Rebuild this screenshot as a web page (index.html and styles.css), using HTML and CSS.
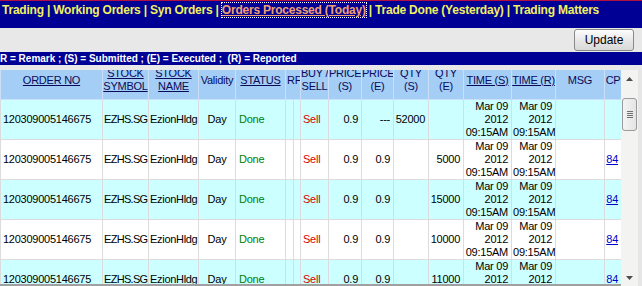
FILE: index.html
```html
<!DOCTYPE html>
<html>
<head>
<meta charset="utf-8">
<link rel="stylesheet" href="styles.css">
</head>
<body>
<div class="topline"></div>
<nav class="nav">
  <a class="nav-link" href="#">Trading</a> | <a class="nav-link" href="#">Working Orders</a> | <a class="nav-link" href="#">Syn Orders</a> | <a class="nav-link active" href="#">Orders Processed (Today)</a> | <a class="nav-link" href="#">Trade Done (Yesterday)</a> | <a class="nav-link" href="#">Trading Matters</a>
</nav>
<div class="toolbar"><button class="btn">Update</button></div>
<div class="legend">R = Remark ; (S) = Submitted ; (E) = Executed ;&nbsp; (R) = Reported</div>
<div class="gap"></div>
<div class="grid-wrap">
  <div class="viewport">
    <table class="orders">
      <colgroup>
        <col style="width:102px"><col style="width:46px"><col style="width:50px"><col style="width:37px"><col style="width:50px"><col style="width:8px"><col style="width:7px"><col style="width:28px"><col style="width:33px"><col style="width:32px"><col style="width:35px"><col style="width:35px"><col style="width:48px"><col style="width:44px"><col style="width:49px"><col style="width:17px">
      </colgroup>
      <thead>
        <tr>
          <th><a href="#">ORDER NO</a></th>
          <th><a href="#">STOCK<br>SYMBOL</a></th>
          <th><a href="#">STOCK<br>NAME</a></th>
          <th>Validity</th>
          <th><a href="#">STATUS</a></th>
          <th colspan="2" class="rf">RF</th>
          <th>BUY /<br>SELL</th>
          <th>PRICE<br>(S)</th>
          <th>PRICE<br>(E)</th>
          <th>QTY<br>(S)</th>
          <th>QTY<br>(E)</th>
          <th><a href="#">TIME (S)</a></th>
          <th><a href="#">TIME (R)</a></th>
          <th>MSG</th>
          <th>CP</th>
        </tr>
      </thead>
      <tbody>
        <tr class="alt">
          <td class="l">120309005146675</td><td class="l sym">EZHS.SG</td><td class="l nm">EzionHldg</td><td class="c">Day</td><td class="l done">Done</td><td></td><td></td><td class="l sell">Sell</td><td class="r">0.9</td><td class="r">---</td><td class="r">52000</td><td class="r"></td><td class="r">Mar 09<br>2012<br>09:15AM</td><td class="r">Mar 09<br>2012<br>09:15AM</td><td></td><td></td>
        </tr>
        <tr>
          <td class="l">120309005146675</td><td class="l sym">EZHS.SG</td><td class="l nm">EzionHldg</td><td class="c">Day</td><td class="l done">Done</td><td></td><td></td><td class="l sell">Sell</td><td class="r">0.9</td><td class="r">0.9</td><td class="r"></td><td class="r">5000</td><td class="r">Mar 09<br>2012<br>09:15AM</td><td class="r">Mar 09<br>2012<br>09:15AM</td><td></td><td class="r"><a class="cp" href="#">84</a></td>
        </tr>
        <tr class="alt">
          <td class="l">120309005146675</td><td class="l sym">EZHS.SG</td><td class="l nm">EzionHldg</td><td class="c">Day</td><td class="l done">Done</td><td></td><td></td><td class="l sell">Sell</td><td class="r">0.9</td><td class="r">0.9</td><td class="r"></td><td class="r">15000</td><td class="r">Mar 09<br>2012<br>09:15AM</td><td class="r">Mar 09<br>2012<br>09:15AM</td><td></td><td class="r"><a class="cp" href="#">84</a></td>
        </tr>
        <tr>
          <td class="l">120309005146675</td><td class="l sym">EZHS.SG</td><td class="l nm">EzionHldg</td><td class="c">Day</td><td class="l done">Done</td><td></td><td></td><td class="l sell">Sell</td><td class="r">0.9</td><td class="r">0.9</td><td class="r"></td><td class="r">10000</td><td class="r">Mar 09<br>2012<br>09:15AM</td><td class="r">Mar 09<br>2012<br>09:15AM</td><td></td><td class="r"><a class="cp" href="#">84</a></td>
        </tr>
        <tr class="alt">
          <td class="l">120309005146675</td><td class="l sym">EZHS.SG</td><td class="l nm">EzionHldg</td><td class="c">Day</td><td class="l done">Done</td><td></td><td></td><td class="l sell">Sell</td><td class="r">0.9</td><td class="r">0.9</td><td class="r"></td><td class="r">11000</td><td class="r">Mar 09<br>2012<br>09:15AM</td><td class="r">Mar 09<br>2012<br>09:15AM</td><td></td><td class="r"><a class="cp" href="#">84</a></td>
        </tr>
      </tbody>
    </table>
  </div>
  <div class="scrollbar">
    <div class="sb-btn"><svg width="7" height="4" viewBox="0 0 7 4"><path d="M0 4 L3.5 0 L7 4 Z" fill="#4d4d4d"/></svg></div>
    <div class="sb-thumb"><span></span><span></span><span></span><span></span></div>
    <div class="sb-track"></div>
    <div class="sb-btn"><svg width="7" height="4" viewBox="0 0 7 4"><path d="M0 0 L3.5 4 L7 0 Z" fill="#4d4d4d"/></svg></div>
  </div>
  <div class="edge"></div>
</div>
</body>
</html>
```

FILE: styles.css
```css
html, body {
  margin: 0;
  padding: 0;
  background: #ffffff;
}
body {
  width: 642px;
  height: 286px;
  overflow: hidden;
  font-family: "Liberation Sans", Arial, sans-serif;
}
.topline {
  height: 1px;
  background: #b01040;
}
.nav {
  height: 27px;
  box-sizing: border-box;
  background: #000094;
  color: #f0f060;
  font-weight: bold;
  font-size: 12px;
  line-height: 16px;
  padding: 1px 0 0 2px;
  white-space: nowrap;
  letter-spacing: -0.22px;
}
.nav-link {
  color: #f0f060;
  text-decoration: none;
}
.nav-link.active {
  color: #f0a070;
  text-decoration: underline;
  outline: 1px dotted #ffffff;
}
.toolbar {
  height: 24px;
  background: #e8e8e8;
  display: flex;
  justify-content: flex-end;
  align-items: center;
  padding-right: 8px;
}
.btn {
  font-family: "Liberation Sans", Arial, sans-serif;
  font-size: 12px;
  height: 22px;
  width: 60px;
  padding: 0;
  border: 1px solid #8a8a8a;
  border-radius: 3px;
  background: linear-gradient(#fdfdfd, #e6e6e6 55%, #d8d8d8);
  color: #000;
}
.legend {
  height: 13px;
  background: #000094;
  color: #ffffff;
  font-weight: bold;
  font-size: 10px;
  line-height: 13px;
  white-space: nowrap;
}
.gap {
  height: 5px;
  background: #e8e8e8;
}
.grid-wrap {
  display: flex;
  height: 216px;
}
.viewport {
  width: 621px;
  height: 216px;
  overflow: hidden;
  border-bottom: 2px solid #a0a0a0;
  box-sizing: border-box;
}
.orders {
  table-layout: fixed;
  width: 621px;
  border-collapse: collapse;
  margin-top: -10px;
  font-size: 11px;
  line-height: 13px;
  letter-spacing: -0.25px;
}
.orders th {
  background: #a4cef6;
  color: #0a0a5a;
  font-weight: normal;
  height: 26px;
  padding: 6px 0 6px;
  border: 1px solid #c9e0f7;
  text-align: center;
  vertical-align: middle;
  white-space: nowrap;
  overflow: hidden;
}
.orders th a {
  color: #0a0a5a;
  text-decoration: underline;
}
.orders th.rf {
  text-align: left;
  padding-left: 1px;
}
.orders td {
  height: 39px;
  padding: 0 1px;
  border: 1px solid #dcdcdc;
  vertical-align: middle;
  white-space: nowrap;
  overflow: hidden;
  color: #000;
}
.orders tr.alt td {
  background: #ccffff;
}
.orders td.l { text-align: left; padding-left: 2px; }
.orders td.r { text-align: right; padding-right: 3px; }
.orders td.c { text-align: center; }
.orders td.sym { letter-spacing: -0.7px; padding-left: 1px; padding-right: 0; }
.orders td.nm { letter-spacing: -0.3px; padding-left: 1px; padding-right: 0; }
.orders td.done { color: #008000; padding-left: 3px; }
.orders td.sell { color: #e00000; padding-left: 2px; }
.cp {
  color: #0000cc;
  text-decoration: underline;
}
.scrollbar {
  width: 17px;
  height: 216px;
  background: #f3f3f1;
  display: flex;
  flex-direction: column;
  box-sizing: border-box;
}
.sb-btn {
  height: 17px;
  display: flex;
  align-items: center;
  justify-content: center;
  flex: none;
}
.sb-thumb {
  margin: 11px 1px 0 1px;
  height: 33px;
  box-sizing: border-box;
  border: 1px solid #9a9a9a;
  border-radius: 3px;
  background: linear-gradient(90deg, #f4f4f4, #e4e4e4);
  display: flex;
  flex-direction: column;
  align-items: center;
  justify-content: center;
  gap: 1px;
  flex: none;
}
.sb-thumb span {
  width: 6px;
  height: 1px;
  background: #707070;
}
.sb-track {
  flex: 1;
}
.edge {
  width: 4px;
  background: #e6e6e6;
}
```
